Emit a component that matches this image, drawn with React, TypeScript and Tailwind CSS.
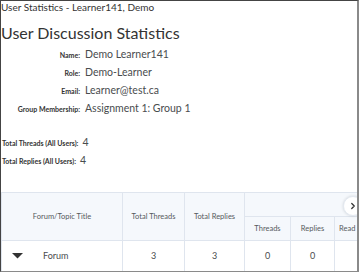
import { ChevronRight } from "lucide-react";

const details = [
  { label: "Name:", value: "Demo Learner141" },
  { label: "Role:", value: "Demo-Learner" },
  { label: "Email:", value: "Learner@test.ca" },
  { label: "Group Membership:", value: "Assignment 1: Group 1" },
];

const totals = [
  { label: "Total Threads (All Users):", value: "4" },
  { label: "Total Replies (All Users):", value: "4" },
];

export default function App() {
  return (
    <div className="h-[273px] w-[360px] bg-white font-['Lato',sans-serif] text-[#494c4e]">
      <div className="relative h-[272px] w-[359px] overflow-hidden border-t border-l border-r-2 border-b border-t-[#444] border-l-[#444] border-r-[#8a8a8a] border-b-[#8a8a8a]">
        <div className="text-[10px] leading-[12px] text-[#333]">
          User Statistics - Learner141, Demo
        </div>
        <h1 className="mt-[10px] text-[16px] leading-[20px] text-[#333]">
          User Discussion Statistics
        </h1>

        {/* User details */}
        <div className="mt-[3px] grid grid-cols-[79px_1fr] gap-x-[5px]">
          {details.map((d) => (
            <div key={d.label} className="contents">
              <div className="flex h-[18px] items-center justify-end text-[7px] font-bold text-[#333]">
                {d.label}
              </div>
              <div className="flex h-[18px] items-center text-[10.5px]">
                {d.value}
              </div>
            </div>
          ))}
        </div>

        {/* Totals */}
        <div className="mt-[16px] pl-[1px]">
          {totals.map((t) => (
            <div key={t.label} className="flex h-[18px] items-center gap-[4px]">
              <span className="text-[7px] font-bold text-[#333]">{t.label}</span>
              <span className="text-[10.5px]">{t.value}</span>
            </div>
          ))}
        </div>

        {/* Discussion table */}
        <table className="mt-[22px] w-[420px] table-fixed border-collapse text-[7.5px] text-[#565a5c]">
          <colgroup>
            <col className="w-[121px]" />
            <col className="w-[62px]" />
            <col className="w-[60px]" />
            <col className="w-[46px]" />
            <col className="w-[44px]" />
            <col className="w-[87px]" />
          </colgroup>
          <thead>
            <tr className="h-[24px] bg-[#f5f8fc]">
              <th rowSpan={2} className="border border-[#dfe5ee] font-normal">
                Forum/Topic Title
              </th>
              <th rowSpan={2} className="border border-[#dfe5ee] font-normal">
                Total Threads
              </th>
              <th rowSpan={2} className="border border-[#dfe5ee] font-normal">
                Total Replies
              </th>
              <th colSpan={3} className="border border-[#dfe5ee] font-normal" />
            </tr>
            <tr className="h-[24px] bg-[#f5f8fc]">
              <th className="border border-[#dfe5ee] font-normal">Threads</th>
              <th className="border border-[#dfe5ee] font-normal">Replies</th>
              <th className="border border-[#dfe5ee] pl-[4px] text-left font-normal">
                Read
              </th>
            </tr>
          </thead>
          <tbody className="text-[9px] text-[#494c4e]">
            <tr className="h-[32px]">
              <td className="border border-[#dfe5ee]">
                <div className="flex items-center pb-[2px]">
                  <svg width="11" height="6" viewBox="0 0 11 6" className="ml-[10px]">
                    <path d="M0 0 L11 0 L5.5 5.5 Z" fill="#333" />
                  </svg>
                  <span className="ml-[20px]">Forum</span>
                </div>
              </td>
              <td className="border border-[#dfe5ee] pb-[2px] text-center">3</td>
              <td className="border border-[#dfe5ee] pb-[2px] text-center">3</td>
              <td className="border border-[#dfe5ee] pb-[2px] text-center">0</td>
              <td className="border border-[#dfe5ee] pb-[2px] text-center">0</td>
              <td className="border border-[#dfe5ee]" />
            </tr>
          </tbody>
        </table>

        {/* Horizontal scroll button */}
        <button className="absolute left-[342px] top-[195px] flex h-[20px] w-[20px] items-center justify-center rounded-full border border-[#e3e9f1] bg-white shadow-[0_0_3px_rgba(0,0,0,0.15)]">
          <ChevronRight size={10} strokeWidth={3} color="#333" />
        </button>
      </div>
    </div>
  );
}
